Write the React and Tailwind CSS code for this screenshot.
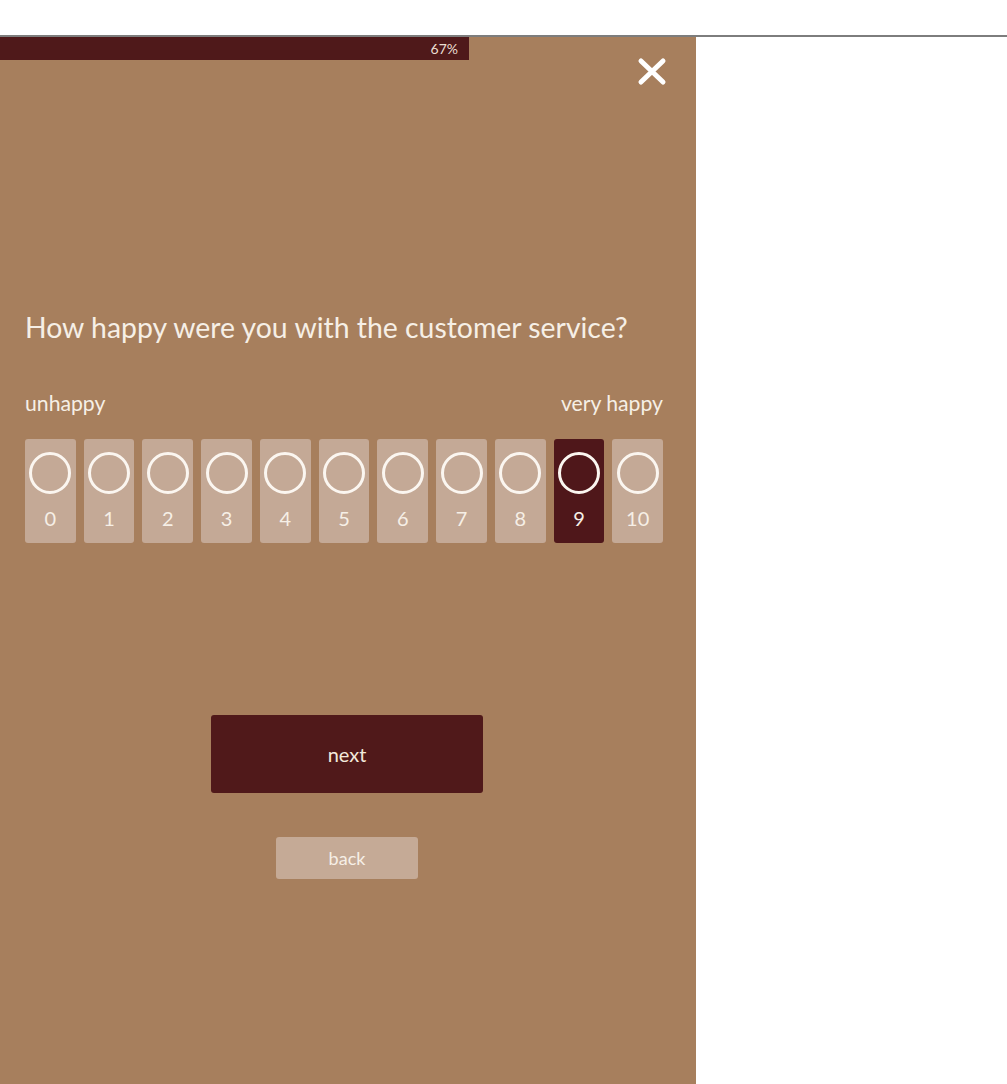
import React, { useState } from "react";

const scale = [0, 1, 2, 3, 4, 5, 6, 7, 8, 9, 10];

function CloseIcon() {
  return (
    <svg width="30" height="29" viewBox="0 0 30 29" fill="none">
      <path
        d="M4 4 L26 25 M26 4 L4 25"
        stroke="#ffffff"
        strokeWidth="5"
        strokeLinecap="round"
      />
    </svg>
  );
}

export default function App() {
  const [value, setValue] = useState(9);

  return (
    <div className="w-[1007px] h-[1084px] bg-white font-['Lato','Open_Sans',sans-serif] overflow-hidden">
      <div className="h-[35px]" />
      <div className="h-[2px] bg-[#7d7d7d]" />
      <div className="relative w-[696px] h-[1047px] bg-[#a77f5d] flex flex-col">
        {/* progress */}
        <div className="h-[23px] w-[469px] bg-[#4f191a] flex items-center justify-end pr-[11px]">
          <span className="text-[14px] leading-[16px] text-[#eadfd2]">67%</span>
        </div>

        <button className="absolute top-[20px] right-[29px]">
          <CloseIcon />
        </button>

        <div className="pl-[25px] w-[663px] mt-[250px]">
          <h1 className="text-[28.4px] leading-[34px] text-[#f6efe6]">
            How happy were you with the customer service?
          </h1>

          <div className="mt-[46px] flex justify-between text-[21.2px] leading-[26px] text-[#f6efe6]">
            <span>unhappy</span>
            <span>very happy</span>
          </div>

          <div className="mt-[23px] flex gap-2">
            {scale.map((n) => (
              <button
                key={n}
                onClick={() => setValue(n)}
                className={
                  "flex-1 h-[104px] rounded-[3px] flex flex-col items-center pt-[13px] " +
                  (value === n ? "bg-[#4f171a]" : "bg-[#c4a996]")
                }
              >
                <span className="w-[42px] h-[42px] rounded-full border-[3px] border-[#fbf6f0]" />
                <span className="mt-[12px] text-[20px] leading-[24px] text-[#f6efe6]">
                  {n}
                </span>
              </button>
            ))}
          </div>
        </div>

        <div className="flex flex-col items-center pr-[2px]">
          <button className="mt-[172px] w-[272px] h-[78px] rounded-[3px] bg-[#50191a] text-[20px] text-[#f3e9dc]">
            next
          </button>
          <button className="mt-[44px] w-[142px] h-[42px] rounded-[3px] bg-[#c5aa96] text-[18px] text-[#f6efe6]">
            back
          </button>
        </div>
      </div>
    </div>
  );
}
